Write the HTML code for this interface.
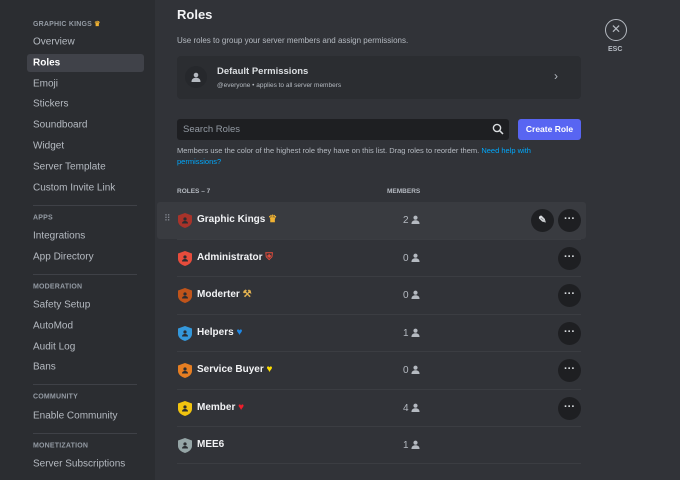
<!DOCTYPE html>
<html><head><style>
*{margin:0;padding:0;box-sizing:border-box}
body{width:680px;height:480px;overflow:hidden;background:#313338;font-family:"Liberation Sans",sans-serif;position:relative;color:#dbdee1}
.sb{position:absolute;left:0;top:0;width:155px;height:480px;background:#2b2d31}
.a{position:absolute;white-space:nowrap}
.it{left:33px;font-size:10px;color:#b5bac1;transform:translateY(-50%)}
.hd{left:33px;font-size:7px;font-weight:bold;color:#949ba4;transform:translateY(-50%);letter-spacing:.2px}
.sep{left:33px;width:104px;height:1px;background:#3f4147}
.row{position:absolute;left:177px;width:404px;height:37px}
.rs{position:absolute;left:177px;width:404px;height:1px;background:#3b3d42}
.sh{position:absolute;left:1px;top:11px}
.nm{position:absolute;left:20px;top:12px;font-size:10px;font-weight:bold;color:#f2f3f5}
.ct{position:absolute;left:226px;top:13px;font-size:10px;color:#b5bac1}
.ct svg{vertical-align:-1px;margin-left:2px}
.dot{position:absolute;right:0;top:7px;width:23px;height:23px;border-radius:50%;background:#1e1f22;color:#dbdee1;font-size:11px;text-align:center;line-height:20px;font-weight:bold}
</style></head><body>
<svg width="0" height="0" style="position:absolute"><defs><symbol id="p" viewBox="0 0 10 10"><circle cx="5" cy="3" r="2.3" fill="#b5bac1"/><path d="M0.5 10c0-3 2-4.2 4.5-4.2S9.5 7 9.5 10z" fill="#b5bac1"/></symbol><symbol id="s" viewBox="0 0 14 15"><path d="M7 0L14 2.5V8c0 3.5-3.5 6-7 7C3.5 14 0 11.5 0 8V2.5z"/><circle cx="7" cy="6" r="1.6" fill="#2b2d31"/><path d="M4 10.5c0-1.8 1.4-2.5 3-2.5s3 .7 3 2.5z" fill="#2b2d31"/></symbol></defs></svg>
<div class="sb"></div>
<div class="a hd" style="top:24px">GRAPHIC KINGS <span style="color:#f0b232">♛</span></div>
<div class="a it" style="top:42px">Overview</div>
<div class="a" style="left:27px;top:54px;width:117px;height:18px;background:#404249;border-radius:3px"></div>
<div class="a it" style="top:63px;color:#fff;font-weight:bold">Roles</div>
<div class="a it" style="top:84px">Emoji</div>
<div class="a it" style="top:104px">Stickers</div>
<div class="a it" style="top:125px">Soundboard</div>
<div class="a it" style="top:146px">Widget</div>
<div class="a it" style="top:167px">Server Template</div>
<div class="a it" style="top:188px">Custom Invite Link</div>
<div class="a sep" style="top:205px"></div>
<div class="a hd" style="top:218px">APPS</div>
<div class="a it" style="top:236px">Integrations</div>
<div class="a it" style="top:257px">App Directory</div>
<div class="a sep" style="top:274px"></div>
<div class="a hd" style="top:287px">MODERATION</div>
<div class="a it" style="top:305px">Safety Setup</div>
<div class="a it" style="top:326px">AutoMod</div>
<div class="a it" style="top:347px">Audit Log</div>
<div class="a it" style="top:367px">Bans</div>
<div class="a sep" style="top:384px"></div>
<div class="a hd" style="top:397px">COMMUNITY</div>
<div class="a it" style="top:416px">Enable Community</div>
<div class="a sep" style="top:433px"></div>
<div class="a hd" style="top:446px">MONETIZATION</div>
<div class="a it" style="top:464px">Server Subscriptions</div>

<div class="a" style="left:177px;top:7px;font-size:13px;font-weight:bold;color:#f2f3f5">Roles</div>
<div class="a" style="left:177px;top:36px;font-size:8px;color:#b5bac1">Use roles to group your server members and assign permissions.</div>
<div class="a" style="left:177px;top:56px;width:404px;height:43px;background:#2b2d31;border-radius:4px"></div>
<div class="a" style="left:185px;top:66px;width:22px;height:22px;border-radius:50%;background:#26282c"></div>
<svg class="a" style="left:191px;top:72px" width="10" height="10"><use href="#p"/></svg>
<div class="a" style="left:217px;top:66px;font-size:9.5px;font-weight:bold;color:#dbdee1">Default Permissions</div>
<div class="a" style="left:217px;top:82px;font-size:6.5px;color:#b5bac1">@everyone • applies to all server members</div>
<div class="a" style="left:554px;top:69px;font-size:12px;color:#b5bac1">›</div>

<div class="a" style="left:177px;top:119px;width:332px;height:21px;background:#1e1f22;border-radius:3px"></div>
<div class="a" style="left:183px;top:124px;font-size:9.5px;color:#949ba4">Search Roles</div>
<svg class="a" style="left:492px;top:123px" width="12" height="12" viewBox="0 0 12 12"><circle cx="5" cy="5" r="3.6" stroke="#dbdee1" stroke-width="1.4" fill="none"/><path d="M7.7 7.7L11 11" stroke="#dbdee1" stroke-width="1.5"/></svg>
<div class="a" style="left:518px;top:119px;width:63px;height:21px;background:#5865f2;border-radius:3px;color:#fff;font-size:8.5px;font-weight:bold;text-align:center;line-height:21px">Create Role</div>
<div class="a" style="left:177px;top:146px;font-size:7.5px;color:#b5bac1">Members use the color of the highest role they have on this list. Drag roles to reorder them. <span style="color:#00a8fc">Need help with</span></div>
<div class="a" style="left:177px;top:157px;font-size:7.5px;color:#00a8fc">permissions?</div>

<div class="a" style="left:177px;top:188px;font-size:6.5px;font-weight:bold;color:#b5bac1">ROLES – 7</div>
<div class="a" style="left:387px;top:188px;font-size:6.5px;font-weight:bold;color:#b5bac1">MEMBERS</div>

<div class="a" style="left:157px;top:202px;width:429px;height:37px;background:#393b40;border-radius:3px"></div>
<div class="a" style="left:164px;top:213px;font-size:9px;color:#80848e;letter-spacing:-1px">⠿</div>

<div class="row" style="top:202px"><svg class="sh" width="14" height="15" fill="#a8332a"><use href="#s"/></svg><div class="nm">Graphic Kings <span style="color:#f0b232">♛</span></div><div class="ct">2<svg width="9" height="9"><use href="#p"/></svg></div>
<div class="dot" style="right:27px;line-height:23px;font-size:10px">✎</div><div class="dot">···</div></div>
<div class="rs" style="top:239px"></div>
<div class="row" style="top:240px"><svg class="sh" width="14" height="15" fill="#e74c3c"><use href="#s"/></svg><div class="nm">Administrator <span style="color:#e74c3c">⛨</span></div><div class="ct">0<svg width="9" height="9"><use href="#p"/></svg></div><div class="dot">···</div></div>
<div class="rs" style="top:276px"></div>
<div class="row" style="top:277px"><svg class="sh" width="14" height="15" fill="#c0541a"><use href="#s"/></svg><div class="nm">Moderter <span style="color:#e0b050">⚒</span></div><div class="ct">0<svg width="9" height="9"><use href="#p"/></svg></div><div class="dot">···</div></div>
<div class="rs" style="top:314px"></div>
<div class="row" style="top:315px"><svg class="sh" width="14" height="15" fill="#3498db"><use href="#s"/></svg><div class="nm">Helpers <span style="color:#1e88e5">♥</span></div><div class="ct">1<svg width="9" height="9"><use href="#p"/></svg></div><div class="dot">···</div></div>
<div class="rs" style="top:351px"></div>
<div class="row" style="top:352px"><svg class="sh" width="14" height="15" fill="#e67e22"><use href="#s"/></svg><div class="nm">Service Buyer <span style="color:#ffe000">♥</span></div><div class="ct">0<svg width="9" height="9"><use href="#p"/></svg></div><div class="dot">···</div></div>
<div class="rs" style="top:389px"></div>
<div class="row" style="top:390px"><svg class="sh" width="14" height="15" fill="#f1c40f"><use href="#s"/></svg><div class="nm">Member <span style="color:#f01e2c">♥</span></div><div class="ct">4<svg width="9" height="9"><use href="#p"/></svg></div><div class="dot">···</div></div>
<div class="rs" style="top:426px"></div>
<div class="row" style="top:427px"><svg class="sh" width="14" height="15" fill="#95a5a6"><use href="#s"/></svg><div class="nm">MEE6</div><div class="ct">1<svg width="9" height="9"><use href="#p"/></svg></div></div>
<div class="rs" style="top:463px"></div>

<div class="a" style="left:605px;top:19px;width:22px;height:22px;border:1.5px solid #b5bac1;border-radius:50%;color:#b5bac1;text-align:center;line-height:19px;font-size:12px">✕</div>
<div class="a" style="left:608px;top:46px;font-size:7px;font-weight:bold;color:#b5bac1">ESC</div>
</body></html>
